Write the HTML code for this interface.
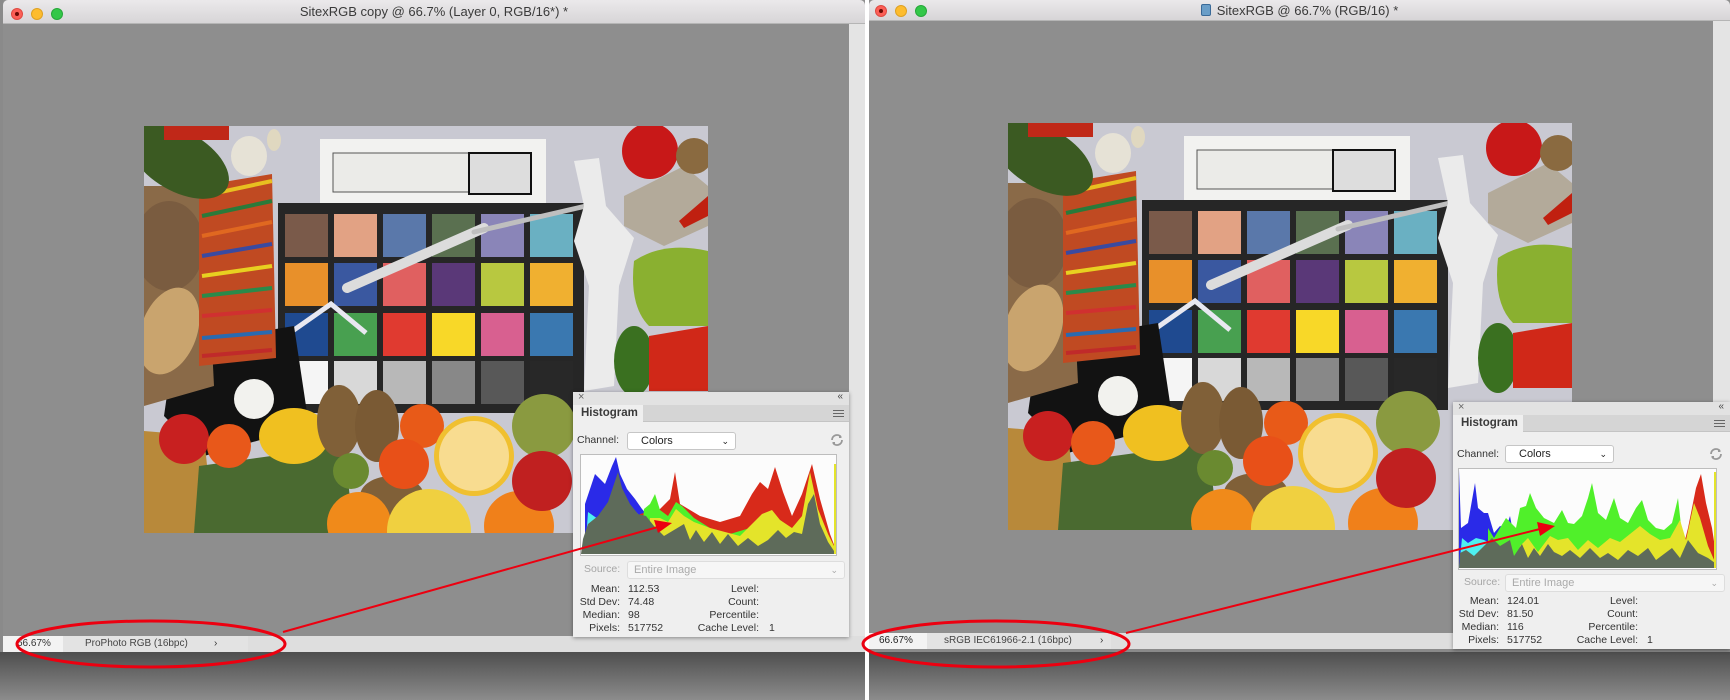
<!DOCTYPE html>
<html><head><meta charset="utf-8">
<style>
*{margin:0;padding:0;box-sizing:border-box}
body{width:1730px;height:700px;overflow:hidden;position:relative;background:#8a8a8a;font-family:"Liberation Sans",sans-serif}
.abs{position:absolute}
.bottom{left:0;top:652px;width:1730px;height:48px;background:linear-gradient(#4e4e4e,#8c8c8c)}
.win{position:absolute;background:#8e8e8e}
.tb{position:absolute;left:0;top:0;right:0;background:linear-gradient(#ebe9eb,#d7d5d7);border-bottom:1px solid #b5b5b5;border-radius:5px 5px 0 0}
.tl{position:absolute;width:12px;height:12px;border-radius:50%}
.title{position:absolute;left:0;right:0;text-align:center;font-size:13px;color:#3a3a3a}
.sb{position:absolute;background:#e4e4e4}
.status{position:absolute;background:#e3e3e3;font-size:10px;color:#333}
.status .z{position:absolute;left:0;top:0;height:16px;background:#f3f3f3;line-height:16px}
.panel{position:absolute;background:#efefef;box-shadow:0 1px 4px rgba(0,0,0,.4);font-size:10.5px;color:#333}
.ph{position:absolute;left:0;top:0;right:0;height:13px;background:#e2e2e2}
.trow{position:absolute;left:0;top:13px;right:0;height:17px;background:#d5d5d5;border-bottom:1px solid #c4c4c4}
.tab{position:absolute;left:0;top:0;width:70px;height:17px;background:#efefef;font-weight:bold;font-size:11.5px;line-height:17px;padding-left:8px;color:#3a3a3a}
.dd{position:absolute;background:#fff;border:1px solid #c6c6c6;border-radius:3px;font-size:11px;line-height:16px;padding-left:13px;color:#222}
.lbl{position:absolute;text-align:right;width:60px}
.val{position:absolute}
</style></head><body>
<div class="abs bottom"></div>
<div class="abs" style="left:865px;top:0;width:4px;height:700px;background:#fff"></div>

<div class="win" style="left:3px;top:0;width:862px;height:652px">
 <div class="tb" style="height:24px">
  <div class="tl" style="left:8px;top:8px;background:#fc5f57;border:1px solid #de4a42"><div style="width:4px;height:4px;border-radius:50%;background:#6a0a05;margin:3px"></div></div>
  <div class="tl" style="left:28px;top:8px;background:#fdbc2e;border:1px solid #dea123"></div>
  <div class="tl" style="left:48px;top:8px;background:#33c748;border:1px solid #27a73a"></div>
  <div class="title" style="top:4px">SitexRGB copy @ 66.7% (Layer 0, RGB/16*) *</div>
 </div>
 <div class="sb" style="left:846px;top:24px;width:16px;height:612px"></div>
 <div class="status" style="left:0;top:636px;width:862px;height:16px">
  <div class="z" style="width:60px;padding-left:14px">66.67%</div>
  <div class="abs" style="left:82px;top:0;line-height:16px;color:#444">ProPhoto RGB (16bpc)</div>
  <div class="abs" style="left:211px;top:0;line-height:16px">›</div>
  <div class="abs" style="left:245px;top:0;width:617px;height:16px;background:#dedede"></div>
 </div>
</div>

<div class="win" style="left:869px;top:0;width:861px;height:649px">
 <div class="tb" style="height:21px">
  <div class="tl" style="left:6px;top:5px;background:#fc5f57;border:1px solid #de4a42"><div style="width:4px;height:4px;border-radius:50%;background:#6a0a05;margin:3px"></div></div>
  <div class="tl" style="left:26px;top:5px;background:#fdbc2e;border:1px solid #dea123"></div>
  <div class="tl" style="left:46px;top:5px;background:#33c748;border:1px solid #27a73a"></div>
  <div class="title" style="top:3px"><span style="display:inline-block;width:10px;height:12px;background:#6a9ec8;border:1px solid #3a6a98;border-radius:2px;vertical-align:-1px;margin-right:6px"></span>SitexRGB @ 66.7% (RGB/16) *</div>
 </div>
 <div class="sb" style="left:844px;top:21px;width:17px;height:612px"></div>
 <div class="status" style="left:0;top:633px;width:861px;height:16px">
  <div class="z" style="width:58px;padding-left:10px;color:#222">66.67%</div>
  <div class="abs" style="left:75px;top:0;line-height:16px;color:#444">sRGB IEC61966-2.1 (16bpc)</div>
  <div class="abs" style="left:231px;top:0;line-height:16px">›</div>
  <div class="abs" style="left:242px;top:0;width:619px;height:16px;background:#dedede"></div>
 </div>
</div>

<svg class="abs" style="left:144px;top:126px" width="564" height="407" viewBox="0 0 564 407">
<rect width="564" height="407" fill="#c9c9d2"/>
<rect x="176" y="13" width="226" height="68" fill="#f2f2f0"/>
<rect x="189" y="27" width="136" height="39" fill="#ebebe8" stroke="#555" stroke-width="1"/>
<rect x="325" y="27" width="62" height="41" fill="#ddd" stroke="#111" stroke-width="2"/>
<rect x="134" y="77" width="306" height="210" fill="#262626"/>
<rect x="141" y="88" width="43" height="43" fill="#7a5a4a"/><rect x="190" y="88" width="43" height="43" fill="#e2a284"/><rect x="239" y="88" width="43" height="43" fill="#5a78aa"/><rect x="288" y="88" width="43" height="43" fill="#5a7050"/><rect x="337" y="88" width="43" height="43" fill="#8a85b8"/><rect x="386" y="88" width="43" height="43" fill="#6ab0c2"/>
<rect x="141" y="137" width="43" height="43" fill="#e8902a"/><rect x="190" y="137" width="43" height="43" fill="#3a58a0"/><rect x="239" y="137" width="43" height="43" fill="#e06060"/><rect x="288" y="137" width="43" height="43" fill="#5a3878"/><rect x="337" y="137" width="43" height="43" fill="#b8c840"/><rect x="386" y="137" width="43" height="43" fill="#f0b030"/>
<rect x="141" y="187" width="43" height="43" fill="#1f4a90"/><rect x="190" y="187" width="43" height="43" fill="#48a050"/><rect x="239" y="187" width="43" height="43" fill="#e03a30"/><rect x="288" y="187" width="43" height="43" fill="#f8d828"/><rect x="337" y="187" width="43" height="43" fill="#d86090"/><rect x="386" y="187" width="43" height="43" fill="#3a78b0"/>
<rect x="141" y="235" width="43" height="43" fill="#f5f5f5"/><rect x="190" y="235" width="43" height="43" fill="#d8d8d8"/><rect x="239" y="235" width="43" height="43" fill="#b8b8b8"/><rect x="288" y="235" width="43" height="43" fill="#888"/><rect x="337" y="235" width="43" height="43" fill="#585858"/><rect x="386" y="235" width="43" height="43" fill="#282828"/>
<line x1="203" y1="162" x2="340" y2="102" stroke="#dcdcdc" stroke-width="10" stroke-linecap="round"/>
<line x1="330" y1="106" x2="442" y2="80" stroke="#bfbfbf" stroke-width="5" stroke-linecap="round"/>
<polyline points="110,232 187,178 222,207" fill="none" stroke="#e8e8f0" stroke-width="5"/>
<polygon points="30,220 150,200 165,300 60,330 20,290" fill="#121212"/>
<path d="M0,60 L60,60 L70,260 L0,280Z" fill="#8a6a48"/>
<ellipse cx="25" cy="120" rx="35" ry="45" fill="#7a5c40"/>
<ellipse cx="25" cy="205" rx="28" ry="45" fill="#c9a46e" transform="rotate(20 25 205)"/>
<path d="M55,60 L128,48 L132,232 L55,240Z" fill="#c04a22"/>
<g stroke-width="4">
<line x1="58" y1="70" x2="128" y2="55" stroke="#e8c020"/><line x1="58" y1="90" x2="128" y2="75" stroke="#2a7a3a"/><line x1="58" y1="110" x2="128" y2="96" stroke="#e06820"/><line x1="58" y1="130" x2="128" y2="118" stroke="#3a4aa0"/><line x1="58" y1="150" x2="128" y2="140" stroke="#e8d020"/><line x1="58" y1="170" x2="128" y2="162" stroke="#2a8a4a"/><line x1="58" y1="190" x2="128" y2="184" stroke="#d03030"/><line x1="58" y1="212" x2="128" y2="206" stroke="#2a6ab0"/><line x1="58" y1="230" x2="128" y2="224" stroke="#c02a2a"/>
</g>
<ellipse cx="35" cy="35" rx="55" ry="30" fill="#3b5a22" transform="rotate(30 35 35)"/>
<rect x="20" y="0" width="65" height="14" fill="#c02818"/>
<ellipse cx="105" cy="30" rx="18" ry="20" fill="#e6e2d6"/><ellipse cx="130" cy="14" rx="7" ry="11" fill="#e0d8c0"/>
<circle cx="110" cy="273" r="20" fill="#f2f2ee"/>
<path d="M430,35 L455,32 L462,80 L490,112 L475,160 L470,260 L440,265 L445,160 L430,115 L440,80Z" fill="#ebebeb"/>
<polygon points="480,70 540,40 564,60 564,100 520,120 480,100" fill="#b3aa9a"/>
<circle cx="506" cy="25" r="28" fill="#c81818"/><circle cx="550" cy="30" r="18" fill="#8a6a40"/>
<polygon points="535,95 564,70 564,90 540,102" fill="#c02010"/>
<path d="M490,135 Q520,115 564,125 L564,200 L505,200 Q485,180 490,135Z" fill="#8ab030"/>
<ellipse cx="490" cy="235" rx="20" ry="35" fill="#3a7020"/>
<path d="M505,210 L564,200 L564,265 L505,265Z" fill="#d02818"/>
<circle cx="400" cy="300" r="32" fill="#8a9a40"/>
<polygon points="0,305 60,310 70,407 0,407" fill="#b8893a"/>
<polygon points="55,340 200,320 210,407 50,407" fill="#4a6a30"/>
<circle cx="40" cy="313" r="25" fill="#c82020"/>
<circle cx="85" cy="320" r="22" fill="#e8581a"/>
<ellipse cx="150" cy="310" rx="35" ry="28" fill="#f0c020"/>
<ellipse cx="195" cy="295" rx="22" ry="36" fill="#806038"/><ellipse cx="233" cy="300" rx="22" ry="36" fill="#7a5a34"/>
<ellipse cx="248" cy="370" rx="32" ry="20" fill="#806038"/>
<circle cx="207" cy="345" r="18" fill="#6a8a30"/>
<circle cx="278" cy="300" r="22" fill="#e85a18"/><circle cx="260" cy="338" r="25" fill="#e85018"/>
<circle cx="215" cy="398" r="32" fill="#f08a1a"/><circle cx="375" cy="400" r="35" fill="#f0801a"/>
<circle cx="285" cy="405" r="42" fill="#f0d040"/>
<circle cx="330" cy="330" r="40" fill="#f0c030"/><circle cx="330" cy="330" r="35" fill="#f8dc90"/>
<circle cx="398" cy="355" r="30" fill="#c02020"/>
</svg>

<svg class="abs" style="left:1008px;top:123px" width="564" height="407" viewBox="0 0 564 407">
<rect width="564" height="407" fill="#c9c9d2"/>
<rect x="176" y="13" width="226" height="68" fill="#f2f2f0"/>
<rect x="189" y="27" width="136" height="39" fill="#ebebe8" stroke="#555" stroke-width="1"/>
<rect x="325" y="27" width="62" height="41" fill="#ddd" stroke="#111" stroke-width="2"/>
<rect x="134" y="77" width="306" height="210" fill="#262626"/>
<rect x="141" y="88" width="43" height="43" fill="#7a5a4a"/><rect x="190" y="88" width="43" height="43" fill="#e2a284"/><rect x="239" y="88" width="43" height="43" fill="#5a78aa"/><rect x="288" y="88" width="43" height="43" fill="#5a7050"/><rect x="337" y="88" width="43" height="43" fill="#8a85b8"/><rect x="386" y="88" width="43" height="43" fill="#6ab0c2"/>
<rect x="141" y="137" width="43" height="43" fill="#e8902a"/><rect x="190" y="137" width="43" height="43" fill="#3a58a0"/><rect x="239" y="137" width="43" height="43" fill="#e06060"/><rect x="288" y="137" width="43" height="43" fill="#5a3878"/><rect x="337" y="137" width="43" height="43" fill="#b8c840"/><rect x="386" y="137" width="43" height="43" fill="#f0b030"/>
<rect x="141" y="187" width="43" height="43" fill="#1f4a90"/><rect x="190" y="187" width="43" height="43" fill="#48a050"/><rect x="239" y="187" width="43" height="43" fill="#e03a30"/><rect x="288" y="187" width="43" height="43" fill="#f8d828"/><rect x="337" y="187" width="43" height="43" fill="#d86090"/><rect x="386" y="187" width="43" height="43" fill="#3a78b0"/>
<rect x="141" y="235" width="43" height="43" fill="#f5f5f5"/><rect x="190" y="235" width="43" height="43" fill="#d8d8d8"/><rect x="239" y="235" width="43" height="43" fill="#b8b8b8"/><rect x="288" y="235" width="43" height="43" fill="#888"/><rect x="337" y="235" width="43" height="43" fill="#585858"/><rect x="386" y="235" width="43" height="43" fill="#282828"/>
<line x1="203" y1="162" x2="340" y2="102" stroke="#dcdcdc" stroke-width="10" stroke-linecap="round"/>
<line x1="330" y1="106" x2="442" y2="80" stroke="#bfbfbf" stroke-width="5" stroke-linecap="round"/>
<polyline points="110,232 187,178 222,207" fill="none" stroke="#e8e8f0" stroke-width="5"/>
<polygon points="30,220 150,200 165,300 60,330 20,290" fill="#121212"/>
<path d="M0,60 L60,60 L70,260 L0,280Z" fill="#8a6a48"/>
<ellipse cx="25" cy="120" rx="35" ry="45" fill="#7a5c40"/>
<ellipse cx="25" cy="205" rx="28" ry="45" fill="#c9a46e" transform="rotate(20 25 205)"/>
<path d="M55,60 L128,48 L132,232 L55,240Z" fill="#c04a22"/>
<g stroke-width="4">
<line x1="58" y1="70" x2="128" y2="55" stroke="#e8c020"/><line x1="58" y1="90" x2="128" y2="75" stroke="#2a7a3a"/><line x1="58" y1="110" x2="128" y2="96" stroke="#e06820"/><line x1="58" y1="130" x2="128" y2="118" stroke="#3a4aa0"/><line x1="58" y1="150" x2="128" y2="140" stroke="#e8d020"/><line x1="58" y1="170" x2="128" y2="162" stroke="#2a8a4a"/><line x1="58" y1="190" x2="128" y2="184" stroke="#d03030"/><line x1="58" y1="212" x2="128" y2="206" stroke="#2a6ab0"/><line x1="58" y1="230" x2="128" y2="224" stroke="#c02a2a"/>
</g>
<ellipse cx="35" cy="35" rx="55" ry="30" fill="#3b5a22" transform="rotate(30 35 35)"/>
<rect x="20" y="0" width="65" height="14" fill="#c02818"/>
<ellipse cx="105" cy="30" rx="18" ry="20" fill="#e6e2d6"/><ellipse cx="130" cy="14" rx="7" ry="11" fill="#e0d8c0"/>
<circle cx="110" cy="273" r="20" fill="#f2f2ee"/>
<path d="M430,35 L455,32 L462,80 L490,112 L475,160 L470,260 L440,265 L445,160 L430,115 L440,80Z" fill="#ebebeb"/>
<polygon points="480,70 540,40 564,60 564,100 520,120 480,100" fill="#b3aa9a"/>
<circle cx="506" cy="25" r="28" fill="#c81818"/><circle cx="550" cy="30" r="18" fill="#8a6a40"/>
<polygon points="535,95 564,70 564,90 540,102" fill="#c02010"/>
<path d="M490,135 Q520,115 564,125 L564,200 L505,200 Q485,180 490,135Z" fill="#8ab030"/>
<ellipse cx="490" cy="235" rx="20" ry="35" fill="#3a7020"/>
<path d="M505,210 L564,200 L564,265 L505,265Z" fill="#d02818"/>
<circle cx="400" cy="300" r="32" fill="#8a9a40"/>
<polygon points="0,305 60,310 70,407 0,407" fill="#b8893a"/>
<polygon points="55,340 200,320 210,407 50,407" fill="#4a6a30"/>
<circle cx="40" cy="313" r="25" fill="#c82020"/>
<circle cx="85" cy="320" r="22" fill="#e8581a"/>
<ellipse cx="150" cy="310" rx="35" ry="28" fill="#f0c020"/>
<ellipse cx="195" cy="295" rx="22" ry="36" fill="#806038"/><ellipse cx="233" cy="300" rx="22" ry="36" fill="#7a5a34"/>
<ellipse cx="248" cy="370" rx="32" ry="20" fill="#806038"/>
<circle cx="207" cy="345" r="18" fill="#6a8a30"/>
<circle cx="278" cy="300" r="22" fill="#e85a18"/><circle cx="260" cy="338" r="25" fill="#e85018"/>
<circle cx="215" cy="398" r="32" fill="#f08a1a"/><circle cx="375" cy="400" r="35" fill="#f0801a"/>
<circle cx="285" cy="405" r="42" fill="#f0d040"/>
<circle cx="330" cy="330" r="40" fill="#f0c030"/><circle cx="330" cy="330" r="35" fill="#f8dc90"/>
<circle cx="398" cy="355" r="30" fill="#c02020"/>
</svg>

<div class="panel" style="left:573px;top:392px;width:276px;height:245px">
 <div class="ph"><span class="abs" style="left:5px;top:-1px;font-size:11px;color:#666">×</span><span class="abs" style="right:6px;top:-1px;font-size:10px;color:#444">«</span></div>
 <div class="trow"><div class="tab">Histogram</div><div class="abs" style="right:5px;top:5px;width:11px;height:7px;border-top:1px solid #666;border-bottom:1px solid #666"><div style="margin-top:2px;border-top:1px solid #666"></div></div></div>
 <div class="abs" style="left:4px;top:42px">Channel:</div>
 <div class="dd" style="left:54px;top:40px;width:109px;height:18px">Colors<span class="abs" style="right:6px;top:0;font-size:9px">⌄</span></div>
 <svg class="abs" style="left:257px;top:41px" width="14" height="14" viewBox="0 0 14 14"><path d="M2,7 A5,5 0 0 1 11,4 M12,7 A5,5 0 0 1 3,10" fill="none" stroke="#999" stroke-width="1.8"/><path d="M9,2 L12,5 L9,5Z M5,12 L2,9 L5,9Z" fill="#999"/></svg>
 <svg class="abs" style="left:7px;top:62px" width="257" height="102" viewBox="0 0 257 102">
  <rect x="0.5" y="0.5" width="256" height="101" fill="#fcfcfc" stroke="#bdbdbd"/>
  <polygon fill="#2a2ae8" points="5,100 5,50 15,20 25,30 32,12 36,3 40,20 47,35 55,45 62,55 68,62 68,100"/>
  <polygon fill="#4ef0f0" points="5,100 8,58 18,65 28,58 40,45 50,52 58,60 60,100"/>
  <polygon fill="#d82a1a" points="60,100 60,60 80,55 90,45 95,18 100,50 120,62 140,68 160,62 172,40 180,28 188,35 195,13 203,38 212,62 222,40 232,10 240,45 250,80 256,96 256,100"/>
  <polygon fill="#50f02a" points="60,100 64,55 70,50 75,40 80,56 88,62 96,48 102,52 108,58 114,64 130,74 150,80 170,74 188,60 200,66 212,75 222,64 230,22 238,58 250,85 256,100"/>
  <polygon fill="#e4e42a" points="68,100 70,64 80,64 88,68 96,55 104,62 114,68 130,74 145,78 160,82 172,70 182,60 192,56 200,66 212,74 222,62 230,18 238,55 248,80 256,96 256,100"/>
  <polygon fill="#5e6b5a" points="1,100 3,85 8,70 18,62 28,48 34,30 38,18 42,34 50,50 58,60 66,62 74,72 84,82 94,76 104,70 110,86 116,76 124,88 132,78 140,90 148,80 158,92 168,84 178,92 188,86 198,76 206,84 214,78 222,80 228,50 234,40 240,70 248,88 256,100"/>
  <rect x="254" y="10" width="2" height="90" fill="#e4e42a"/>
 </svg>
 <div class="abs" style="left:11px;top:171px;color:#a6a6a6">Source:</div>
 <div class="dd" style="left:54px;top:169px;width:218px;height:18px;color:#aaa;padding-left:6px;border-color:#ddd;background:#f6f6f6">Entire Image<span class="abs" style="right:6px;top:0;font-size:9px">⌄</span></div>
 <div class="lbl" style="left:-13px;top:191px">Mean:</div><div class="val" style="left:55px;top:191px">112.53</div>
 <div class="lbl" style="left:-13px;top:204px">Std Dev:</div><div class="val" style="left:55px;top:204px">74.48</div>
 <div class="lbl" style="left:-13px;top:217px">Median:</div><div class="val" style="left:55px;top:217px">98</div>
 <div class="lbl" style="left:-13px;top:230px">Pixels:</div><div class="val" style="left:55px;top:230px">517752</div>
 <div class="lbl" style="left:86px;top:191px;width:100px">Level:</div>
 <div class="lbl" style="left:86px;top:204px;width:100px">Count:</div>
 <div class="lbl" style="left:86px;top:217px;width:100px">Percentile:</div>
 <div class="lbl" style="left:86px;top:230px;width:100px">Cache Level:</div><div class="val" style="left:196px;top:230px">1</div>
</div>

<div class="panel" style="left:1453px;top:402px;width:277px;height:247px">
 <div class="ph"><span class="abs" style="left:5px;top:-1px;font-size:11px;color:#666">×</span><span class="abs" style="right:6px;top:-1px;font-size:10px;color:#444">«</span></div>
 <div class="trow"><div class="tab">Histogram</div><div class="abs" style="right:5px;top:5px;width:11px;height:7px;border-top:1px solid #666;border-bottom:1px solid #666"><div style="margin-top:2px;border-top:1px solid #666"></div></div></div>
 <div class="abs" style="left:4px;top:46px">Channel:</div>
 <div class="dd" style="left:52px;top:43px;width:109px;height:18px">Colors<span class="abs" style="right:6px;top:0;font-size:9px">⌄</span></div>
 <svg class="abs" style="left:256px;top:45px" width="14" height="14" viewBox="0 0 14 14"><path d="M2,7 A5,5 0 0 1 11,4 M12,7 A5,5 0 0 1 3,10" fill="none" stroke="#999" stroke-width="1.8"/><path d="M9,2 L12,5 L9,5Z M5,12 L2,9 L5,9Z" fill="#999"/></svg>
 <svg class="abs" style="left:5px;top:66px" width="259" height="102" viewBox="0 0 259 102">
  <rect x="0.5" y="0.5" width="258" height="101" fill="#fcfcfc" stroke="#bdbdbd"/>
  <polygon fill="#2a2ae8" points="1,100 1,2 3,60 10,55 17,15 20,40 26,45 30,45 36,65 42,58 48,60 52,48 58,80 58,100"/>
  <polygon fill="#4ef0f0" points="1,100 4,70 10,75 18,70 26,72 34,76 44,70 56,72 62,90 62,100"/>
  <polygon fill="#d82a1a" points="220,100 230,60 238,20 243,6 248,35 254,60 257,80 257,100"/>
  <polygon fill="#50f02a" points="30,100 30,60 36,70 48,50 58,60 62,40 68,38 72,25 78,40 86,50 96,55 104,42 110,55 116,56 124,48 130,30 134,15 140,45 148,52 156,30 162,50 170,55 178,40 184,32 190,52 198,60 206,62 214,55 220,30 226,85 232,60 240,80 248,90 257,96 257,100"/>
  <polygon fill="#e4e42a" points="60,100 62,78 70,70 80,84 92,68 100,72 110,70 120,82 130,72 140,80 152,70 162,74 172,66 182,58 192,66 202,72 212,70 222,52 228,72 236,35 242,50 250,78 257,94 257,100"/>
  <polygon fill="#5e6b5a" points="1,100 2,85 8,82 16,88 24,80 34,70 42,78 52,72 56,88 64,76 70,90 76,80 82,88 90,76 96,84 104,88 112,82 122,90 132,80 142,90 150,85 160,92 170,82 180,88 190,80 198,92 206,86 214,80 222,90 230,72 240,85 250,90 257,95 257,100"/>
  <rect x="256" y="4" width="2" height="96" fill="#e4e42a"/>
 </svg>
 <div class="abs" style="left:11px;top:174px;color:#a6a6a6">Source:</div>
 <div class="dd" style="left:52px;top:172px;width:220px;height:18px;color:#aaa;padding-left:6px;border-color:#ddd;background:#f6f6f6">Entire Image<span class="abs" style="right:6px;top:0;font-size:9px">⌄</span></div>
 <div class="lbl" style="left:-14px;top:193px">Mean:</div><div class="val" style="left:54px;top:193px">124.01</div>
 <div class="lbl" style="left:-14px;top:206px">Std Dev:</div><div class="val" style="left:54px;top:206px">81.50</div>
 <div class="lbl" style="left:-14px;top:219px">Median:</div><div class="val" style="left:54px;top:219px">116</div>
 <div class="lbl" style="left:-14px;top:232px">Pixels:</div><div class="val" style="left:54px;top:232px">517752</div>
 <div class="lbl" style="left:85px;top:193px;width:100px">Level:</div>
 <div class="lbl" style="left:85px;top:206px;width:100px">Count:</div>
 <div class="lbl" style="left:85px;top:219px;width:100px">Percentile:</div>
 <div class="lbl" style="left:85px;top:232px;width:100px">Cache Level:</div><div class="val" style="left:194px;top:232px">1</div>
</div>

<svg class="abs" style="left:0;top:0" width="1730" height="700">
 <ellipse cx="151" cy="644" rx="134" ry="23" fill="none" stroke="#ec0010" stroke-width="3"/>
 <ellipse cx="996" cy="644" rx="133" ry="23" fill="none" stroke="#ec0010" stroke-width="3"/>
 <line x1="283" y1="632" x2="658" y2="527" stroke="#ec0010" stroke-width="2"/>
 <polygon points="672,523 654,520 658,533" fill="#ec0010"/>
 <line x1="1126" y1="633" x2="1540" y2="529" stroke="#ec0010" stroke-width="2"/>
 <polygon points="1555,526 1537,522 1540,536" fill="#ec0010"/>
</svg>
</body></html>
